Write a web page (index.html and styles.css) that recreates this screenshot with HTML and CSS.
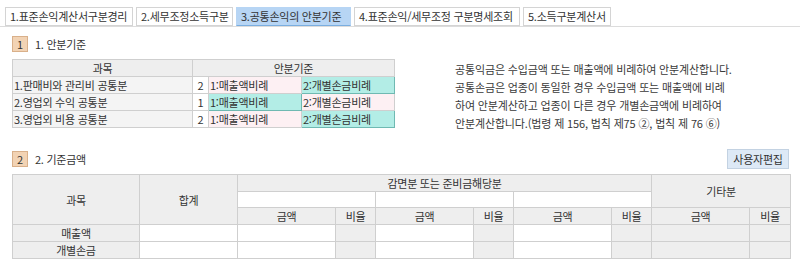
FILE: index.html
```html
<!DOCTYPE html>
<html lang="ko">
<head>
<meta charset="utf-8">
<link rel="stylesheet" href="styles.css">
</head>
<body>
<div class="tabs">
  <div class="tab t1">1.표준손익계산서구분경리</div>
  <div class="tab t2">2.세무조정소득구분</div>
  <div class="tab t3 active">3.공통손익의 안분기준</div>
  <div class="tab t4">4.표준손익/세무조정 구분명세조회</div>
  <div class="tab t5">5.소득구분계산서</div>
</div>

<div class="sec-title s1">
  <span class="badge">1</span><span class="title-text">1. 안분기준</span>
</div>

<div class="sec1-body">
  <table class="grid g1">
    <colgroup>
      <col class="c-subj"><col class="c-num"><col class="c-opt"><col class="c-opt">
    </colgroup>
    <tr class="hrow"><th>과목</th><th colspan="3">안분기준</th></tr>
    <tr><td class="left">1.판매비와 관리비 공통분</td><td class="num">2</td><td class="opt">1:매출액비례</td><td class="opt sel">2:개별손금비례</td></tr>
    <tr><td class="left">2.영업외 수익 공통분</td><td class="num">1</td><td class="opt sel">1:매출액비례</td><td class="opt">2:개별손금비례</td></tr>
    <tr><td class="left">3.영업외 비용 공통분</td><td class="num">2</td><td class="opt">1:매출액비례</td><td class="opt sel">2:개별손금비례</td></tr>
  </table>
  <div class="note">
    <p>공통익금은 수입금액 또는 매출액에 비례하여 안분계산합니다.</p>
    <p>공통손금은 업종이 동일한 경우 수입금액 또는 매출액에 비례</p>
    <p>하여 안분계산하고 업종이 다른 경우 개별손금액에 비례하여</p>
    <p>안분계산합니다.(법령 제 156, 법칙 제75 ②, 법칙 제 76 ⑥)</p>
  </div>
</div>

<div class="sec-title s2">
  <span class="badge">2</span><span class="title-text">2. 기준금액</span>
  <span class="btn">사용자편집</span>
</div>

<table class="grid g2">
  <colgroup>
    <col class="w127"><col class="w98"><col class="w98"><col class="w40"><col class="w98"><col class="w40"><col class="w98"><col class="w40"><col class="w98"><col class="w41">
  </colgroup>
  <tr><th rowspan="3">과목</th><th rowspan="3">합계</th><th colspan="6">감면분 또는 준비금해당분</th><th colspan="2" rowspan="2">기타분</th></tr>
  <tr><td colspan="2"></td><td colspan="2"></td><td colspan="2"></td></tr>
  <tr><th>금액</th><th>비율</th><th>금액</th><th>비율</th><th>금액</th><th>비율</th><th>금액</th><th>비율</th></tr>
  <tr><th>매출액</th><td></td><td></td><td class="gray"></td><td></td><td class="gray"></td><td></td><td class="gray"></td><td class="gray"></td><td class="gray"></td></tr>
  <tr><th>개별손금</th><td></td><td></td><td class="gray"></td><td></td><td class="gray"></td><td></td><td class="gray"></td><td class="gray"></td><td class="gray"></td></tr>
</table>
</body>
</html>
```

FILE: styles.css
```css
* { box-sizing: border-box; }
body {
  margin: 0;
  background: #fff;
  color: #333;
  font-family: "Noto Sans CJK KR", "Noto Sans", sans-serif;
  font-size: 11px;
  letter-spacing: -0.25px;
}
.tabs {
  display: flex;
  gap: 3px;
  padding: 7px 0 0 5px;
  height: 27px;
  border-bottom: 1px solid #dcdcdc;
}
.tab {
  height: 19px;
  line-height: 17px;
  border: 1px solid #d4d4d4;
  background: #fff;
  padding: 0 3px 0 4px;
  white-space: nowrap;
}
.t1 { width: 128px; }
.t2 { width: 97px; }
.t3 { width: 115px; }
.t4 { width: 166px; }
.t5 { width: 88px; }
.tab.active {
  background: #b7d5f4;
  border-color: #b7d5f4;
  border-bottom: 1px solid #7aaee0;
}
.sec-title {
  display: flex;
  align-items: center;
  padding-left: 12px;
  padding-right: 11px;
}
.s1 { margin-top: 9px; height: 16px; }
.s2 { margin-top: 17px; height: 20px; }
.badge {
  width: 16px;
  height: 16px;
  line-height: 14px;
  text-align: center;
  background: #f2d3b4;
  border: 1px solid #d9b08a;
  color: #333;
  font-size: 11px;
}
.title-text { margin-left: 7px; }
.btn {
  margin-left: auto;
  width: 62px;
  height: 20px;
  line-height: 18px;
  text-align: center;
  background: #dde9f6;
  border: 1px solid #c3d2e2;
  color: #333;
}
.sec1-body {
  display: flex;
  align-items: flex-start;
  margin-top: 7px;
  padding-left: 12px;
}
.grid {
  border-collapse: collapse;
  table-layout: fixed;
}
.grid th, .grid td {
  border: 1px solid #cfcfcf;
  padding: 0 2px;
  white-space: nowrap;
  overflow: hidden;
  font-weight: normal;
}
.grid th { background: #eeeeee; text-align: center; }
.g1 { width: 381px; }
.g1 tr { height: 17px; }
.c-subj { width: 180px; }
.c-num { width: 16px; }
.c-opt { width: 93px; }
.g1 td.left { background: #f4f4f4; text-align: left; padding-left: 1px; }
.g1 td.num { text-align: center; background: #fff; }
.g1 td.opt { background: #fdf0f3; padding-left: 1px; }
.g1 td.opt.sel { background: #b3ede6; border: 1px solid #6fb9b2; }
.note {
  margin-left: 60px;
  margin-top: 1px;
  color: #3a3a3a;
  letter-spacing: -0.15px;
}
.note p { margin: 0; line-height: 18px; }
.g2 {
  margin: 5px 0 0 12px;
  width: 778px;
}
.g2 tr { height: 16px; }
.g2 td { background: #fff; }
.g2 td.gray { background: #eeeeee; }
.w127 { width: 127px; }
.w98 { width: 98px; }
.w40 { width: 40px; }
.w41 { width: 41px; }
```
